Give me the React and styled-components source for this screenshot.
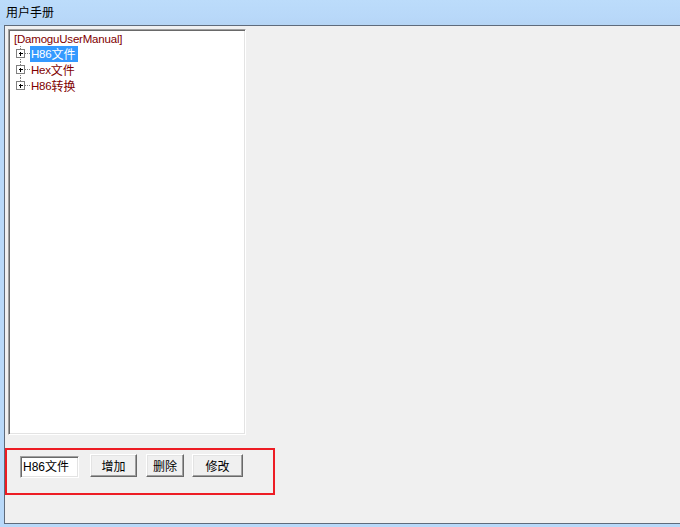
import React from "react";
import styled, { createGlobalStyle } from "styled-components";

const Global = createGlobalStyle`
  html, body { margin: 0; padding: 0; background: #b9d9f9; }
  body { font-family: "Liberation Sans", "Noto Sans CJK SC", sans-serif; }
`;

const Window = styled.div`
  width: 680px;
  height: 527px;
  display: flex;
  flex-direction: column;
  background: #b9d9f9;
  overflow: hidden;
`;

const TitleBar = styled.div`
  height: 25px;
  flex: none;
  padding-left: 6px;
  font-family: "Noto Sans CJK SC", sans-serif;
  font-size: 12px;
  line-height: 23px;
  color: #000;
  background: linear-gradient(180deg, #bcdcfb 0%, #b8d8f9 70%, #b6d5f4 100%);
`;

const Client = styled.div`
  flex: 1;
  margin: 0 0 3px 4px;
  border-left: 1px solid #5f6b7b;
  border-top: 1px solid #5f6b7b;
  border-bottom: 1px solid #5f6b7b;
  background: #f0f0f0;
  padding-top: 3px;
  display: flex;
  flex-direction: column;
`;

const TreeBox = styled.div`
  width: 238px;
  height: 406px;
  margin-left: 3px;
  box-sizing: border-box;
  background: #fff;
  border: 1px solid;
  border-color: #a0a0a0 #fff #fff #a0a0a0;
  box-shadow: inset 1px 1px 0 #696969, inset -1px -1px 0 #e3e3e3;
  padding: 1px 0 0 1px;
  display: flex;
  flex-direction: column;
`;

const RootRow = styled.div`
  height: 15px;
  display: flex;
  align-items: center;
  padding-left: 2px;
`;

const ChildRow = styled.div`
  height: 16px;
  display: flex;
  align-items: stretch;
`;

const Label = styled.span`
  display: inline-flex;
  align-items: center;
  height: ${(p) => (p.$root ? 15 : 16)}px;
  padding: 0 2px 0 ${(p) => (p.$root ? 2 : 1)}px;
  font-size: 11.5px;
  letter-spacing: -0.2px;
  color: ${(p) => (p.$selected ? "#fff" : "#800000")};
  background: ${(p) => (p.$selected ? "#3399ff" : "transparent")};
  white-space: nowrap;
`;

const Han = styled.span`
  font-family: "Noto Sans CJK SC", sans-serif;
  font-size: 12px;
  letter-spacing: 0;
  line-height: 16px;
`;

const Annotation = styled.div`
  width: 270px;
  height: 47px;
  margin-top: 13px;
  box-sizing: border-box;
  border: 2px solid #ed1c24;
  padding: 4px 0 0 13px;
  display: flex;
  align-items: flex-start;
`;

const TextBox = styled.div`
  width: 59px;
  height: 22px;
  margin-top: 2px;
  margin-right: 11px;
  box-sizing: border-box;
  background: #fff;
  border: 1px solid;
  border-color: #a0a0a0 #fff #fff #a0a0a0;
  box-shadow: inset 1px 1px 0 #696969, inset -1px -1px 0 #e3e3e3;
  padding: 0 0 0 2px;
  font-size: 12px;
  line-height: 20px;
  color: #000;
  white-space: nowrap;
`;

const Button = styled.button`
  width: ${(p) => p.$w}px;
  height: 23px;
  margin-right: ${(p) => p.$gap || 0}px;
  padding: 0;
  box-sizing: border-box;
  background: #f0f0f0;
  border: 1px solid;
  border-color: #fff #696969 #696969 #fff;
  box-shadow: inset -1px -1px 0 #a0a0a0, inset 1px 1px 0 #e3e3e3;
  font-family: "Noto Sans CJK SC", sans-serif;
  font-size: 12px;
  line-height: 21px;
  color: #000;
`;

function Connector({ last }) {
  return (
    <svg width="20" height="16" viewBox="0 0 20 16" shapeRendering="crispEdges" style={{ flex: "none" }}>
      <line x1="10.5" y1="0" x2="10.5" y2="3" stroke="#808080" strokeDasharray="1 1" />
      {!last && <line x1="10.5" y1="13" x2="10.5" y2="16" stroke="#808080" strokeDasharray="1 1" />}
      <line x1="15" y1="7.5" x2="20" y2="7.5" stroke="#808080" strokeDasharray="1 1" />
      <rect x="6.5" y="3.5" width="8" height="8" fill="#fff" stroke="#808080" />
      <line x1="8.5" y1="7.5" x2="13" y2="7.5" stroke="#000" />
      <line x1="10.5" y1="5.5" x2="10.5" y2="10" stroke="#000" />
    </svg>
  );
}

const items = [
  { latin: "H86", han: "文件", selected: true },
  { latin: "Hex", han: "文件" },
  { latin: "H86", han: "转换" },
];

export default function App() {
  return (
    <>
      <Global />
      <Window>
        <TitleBar>用户手册</TitleBar>
        <Client>
          <TreeBox>
            <RootRow>
              <Label $root>[DamoguUserManual]</Label>
            </RootRow>
            {items.map((it, i) => (
              <ChildRow key={i}>
                <Connector last={i === items.length - 1} />
                <Label $selected={it.selected}>
                  {it.latin}
                  <Han>{it.han}</Han>
                </Label>
              </ChildRow>
            ))}
          </TreeBox>
          <Annotation>
            <TextBox>
              H86<Han>文件</Han>
            </TextBox>
            <Button $w={47} $gap={9}>增加</Button>
            <Button $w={38} $gap={8}>删除</Button>
            <Button $w={51}>修改</Button>
          </Annotation>
        </Client>
      </Window>
    </>
  );
}
